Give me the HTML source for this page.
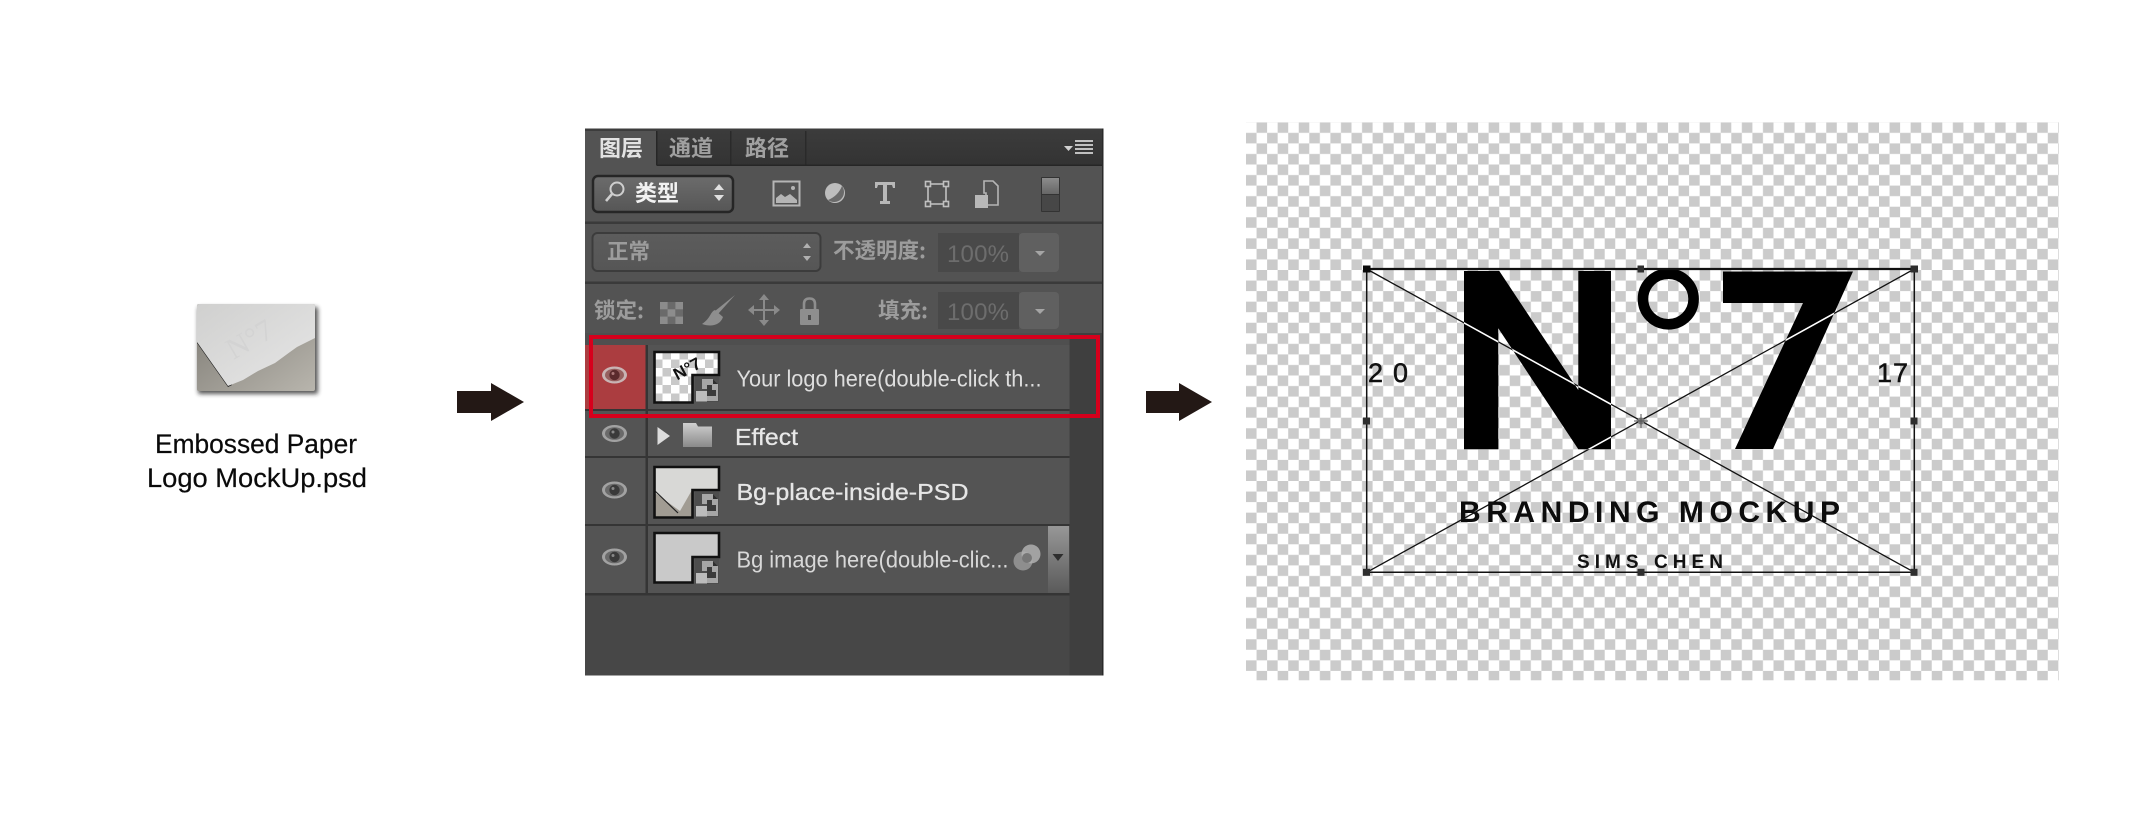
<!DOCTYPE html>
<html><head><meta charset="utf-8"><title>Embossed Paper Logo MockUp</title>
<style>
html,body{margin:0;padding:0;background:#fff;width:2153px;height:831px;overflow:hidden}
svg{display:block}
text{font-family:"Liberation Sans","Noto Sans CJK SC",sans-serif}
.cjk{font-family:"Noto Sans CJK SC","Liberation Sans",sans-serif}
</style></head><body>
<svg width="2153" height="831" viewBox="0 0 2153 831" xmlns="http://www.w3.org/2000/svg">
<defs>
<pattern id="chk" x="1246" y="122.3" width="21.1" height="21.1" patternUnits="userSpaceOnUse">
<rect width="21.1" height="21.1" fill="#fff"/><rect x="10.55" width="10.55" height="10.55" fill="#cbcbcb"/><rect y="10.55" width="10.55" height="10.55" fill="#cbcbcb"/>
</pattern>
<pattern id="chk2" x="654" y="351" width="17" height="17" patternUnits="userSpaceOnUse">
<rect width="17" height="17" fill="#fff"/><rect x="8.5" width="8.5" height="8.5" fill="#c9c9c9"/><rect y="8.5" width="8.5" height="8.5" fill="#c9c9c9"/>
</pattern>
<linearGradient id="tabBar" x1="0" y1="0" x2="0" y2="1"><stop offset="0" stop-color="#3c3c3c"/><stop offset="1" stop-color="#333"/></linearGradient>
<linearGradient id="sel" x1="0" y1="0" x2="0" y2="1"><stop offset="0" stop-color="#6c6c6c"/><stop offset="1" stop-color="#565656"/></linearGradient>
<linearGradient id="sel2" x1="0" y1="0" x2="0" y2="1"><stop offset="0" stop-color="#5c5c5c"/><stop offset="1" stop-color="#565656"/></linearGradient>
<linearGradient id="scr" x1="0" y1="0" x2="0" y2="1"><stop offset="0" stop-color="#979797"/><stop offset="1" stop-color="#5a5a5a"/></linearGradient>
<linearGradient id="tgl" x1="0" y1="0" x2="0" y2="1"><stop offset="0" stop-color="#8c8c8c"/><stop offset="1" stop-color="#666"/></linearGradient>
<linearGradient id="fold" x1="0" y1="0" x2="0" y2="1"><stop offset="0" stop-color="#cfcfcf"/><stop offset="1" stop-color="#8a8a8a"/></linearGradient>
<linearGradient id="grey" x1="0" y1="0" x2="1" y2="1"><stop offset="0" stop-color="#7d7a73"/><stop offset="1" stop-color="#b8b5ad"/></linearGradient>
<linearGradient id="paper" x1="0" y1="0" x2="1" y2="1"><stop offset="0" stop-color="#d0d0cf"/><stop offset="1" stop-color="#e6e6e6"/></linearGradient>
<filter id="blur3"><feGaussianBlur stdDeviation="2"/></filter>
<clipPath id="logoClip">
<path d="M1464 271H1499.3L1578.3 390V271H1611V449.3H1578.3L1498.3 328.3V449.3H1464Z"/>
<path d="M1723 271.5H1853L1773 449H1735L1803 303H1723Z"/>
</clipPath>
<clipPath id="thumbClip"><rect x="197" y="304" width="118" height="87" rx="2"/></clipPath>
<clipPath id="t3"><path d="M654 466H719V490H692V518H654Z"/></clipPath>
<g id="eye">
<ellipse rx="12.5" ry="8.5" fill="#a2a2a2"/>
<ellipse rx="9.5" ry="6.3" fill="#6a6a6a"/>
<circle r="5.2" fill="#3a3a3a"/><circle cx="-1.5" cy="-1.5" r="1.5" fill="#888"/>
</g>
<g id="eyeR">
<ellipse rx="12.5" ry="8.5" fill="#c9b4b4"/>
<ellipse rx="9.5" ry="6.3" fill="#96605f"/>
<circle r="5.2" fill="#5b2a2c"/><circle cx="-1.5" cy="-1.5" r="1.5" fill="#a77"/>
</g>
<g id="smart">
<rect width="24" height="25" fill="#4d4d4d"/>
<path d="M7 2H18L23 7V24H12V12H7Z" fill="#a6a6a6"/>
<path d="M12 8H17V13H21V19H12Z" fill="#3b3b3b"/>
<path d="M18 2L23 7H18Z" fill="#2e2e2e"/>
<rect x="1" y="14" width="11" height="10.5" fill="#bcbcbc"/>
</g>
</defs>

<rect width="2153" height="831" fill="#fff"/>

<!-- left thumbnail -->
<rect x="198" y="307" width="120" height="87" rx="2" fill="#222" opacity=".75" filter="url(#blur3)"/>
<g clip-path="url(#thumbClip)">
<rect x="197" y="304" width="118" height="87" fill="url(#grey)"/>
<path d="M197 343L228 387L232 385L199 339Z" fill="#1b1b1b"/>
<path d="M197 304H315V338L297 347L290 352L275 363L258 371L243 380L228 386L197 342Z" fill="url(#paper)"/>
<text x="250" y="349" font-size="30" fill="#d3d3d3" transform="rotate(-30 250 340)" text-anchor="middle" style="font-family:'Liberation Serif',serif">N°7</text>
</g>
<text x="155" y="453" font-size="26.4" fill="#0a0a0a" stroke="#0a0a0a" stroke-width=".2" textLength="202" lengthAdjust="spacingAndGlyphs">Embossed Paper</text>
<text x="147" y="487" font-size="26.8" fill="#0a0a0a" stroke="#0a0a0a" stroke-width=".2" textLength="220" lengthAdjust="spacingAndGlyphs">Logo MockUp.psd</text>

<!-- arrows -->
<path d="M457 391H491V383L524 402L491 421V413H457Z" fill="#231815"/>
<path d="M1146 391H1179V383L1212 402L1179 421V413H1146Z" fill="#231815"/>

<!-- panel -->
<rect x="585" y="128.5" width="518.5" height="547" fill="#535353"/>
<rect x="585" y="128.5" width="518.5" height="37" fill="url(#tabBar)"/>
<rect x="585" y="131" width="71" height="35.5" fill="#535353"/>
<rect x="656" y="131" width="1.5" height="34.5" fill="#262626"/>
<rect x="730" y="131" width="1.5" height="34.5" fill="#2a2a2a"/>
<rect x="805" y="131" width="1.5" height="34.5" fill="#2a2a2a"/>
<rect x="657" y="164.5" width="446" height="1.5" fill="#262626"/>
<text class="cjk" x="599" y="156" font-size="22" fill="#e2e2e2" font-weight="700">图层</text>
<text class="cjk" x="669" y="156" font-size="22" fill="#a0a0a0" font-weight="700">通道</text>
<text class="cjk" x="745" y="156" font-size="22" fill="#a0a0a0" font-weight="700">路径</text>
<g transform="translate(0,-1)">
<path d="M1064 147H1073L1068.5 152Z" fill="#d0d0d0"/>
<path d="M1075 142H1093M1075 146H1093M1075 150H1093M1075 154H1093" stroke="#c0c0c0" stroke-width="2" fill="none"/>
</g>

<!-- row 1 -->
<rect x="593" y="176" width="140" height="36" rx="5" fill="url(#sel)" stroke="#262626" stroke-width="2.5"/>
<g transform="translate(0,-2)">
<circle cx="617" cy="191" r="6.5" fill="none" stroke="#cfcfcf" stroke-width="2"/>
<path d="M612 196L606 203" stroke="#cfcfcf" stroke-width="2.6"/>
<path d="M719 186L724 192H714ZM719 203L724 197H714Z" fill="#e0e0e0"/>
<rect x="773.5" y="183.5" width="26" height="24" fill="none" stroke="#b5b5b5" stroke-width="2"/>
<path d="M776 205V200L781 196L785 199L790 196L797 202V205Z" fill="#b5b5b5"/><circle cx="793" cy="190" r="2" fill="#b5b5b5"/>
<circle cx="835" cy="195" r="10" fill="#bdbdbd"/><path d="M842 188A10 10 0 0 1 828 202Q838 198 842 188Z" fill="#6a6a6a"/>
<path d="M875 184H895V190H893L892 187H887V203H890V206H880V203H883V187H878L877 190H875Z" fill="#b8b8b8"/>
<path d="M928 186H946V206H928Z" fill="none" stroke="#b5b5b5" stroke-width="1.8"/>
<g fill="#535353" stroke="#c0c0c0" stroke-width="1.6"><rect x="925.5" y="183.5" width="5" height="5"/><rect x="943.5" y="183.5" width="5" height="5"/><rect x="925.5" y="203.5" width="5" height="5"/><rect x="943.5" y="203.5" width="5" height="5"/></g>
<path d="M984 183H993L998 188V207H986V195H984Z" fill="#535353" stroke="#b5b5b5" stroke-width="1.6"/>
<rect x="975" y="197" width="13" height="13" fill="#b8b8b8"/>
<rect x="1041" y="179" width="19" height="35" rx="1" fill="#333"/>
<rect x="1042" y="180" width="17" height="16" fill="url(#tgl)"/>
<rect x="1042" y="197" width="17" height="16" fill="#474747"/>
</g>
<text class="cjk" x="635" y="201" font-size="22" fill="#f2f2f2" font-weight="700">类型</text>
<rect x="585" y="221.5" width="518.5" height="2.5" fill="#3a3a3a"/>

<!-- row 2 -->
<rect x="592.5" y="233" width="228" height="38" rx="5" fill="url(#sel2)" stroke="#3c3c3c" stroke-width="2"/>
<text class="cjk" x="607" y="259" font-size="21.5" fill="#9c9c9c" font-weight="700">正常</text>
<path d="M807 243L811 248H803ZM807 261L811 256H803Z" fill="#b0b0b0"/>
<text class="cjk" x="833" y="258" font-size="21.5" fill="#9c9c9c" font-weight="700">不透明度:</text>
<rect x="938" y="233" width="81" height="39" fill="#494949"/>
<rect x="1019" y="233" width="40" height="39" rx="4" fill="#606060"/>
<text x="947" y="262" font-size="24" fill="#6d6d6d" textLength="62" lengthAdjust="spacing">100%</text>
<path d="M1035 251H1045L1040 256Z" fill="#a5a5a5"/>
<rect x="585" y="281.5" width="518.5" height="2.5" fill="#3a3a3a"/>

<!-- row 3 -->
<text class="cjk" x="594" y="318" font-size="21.5" fill="#9c9c9c" font-weight="700">锁定:</text>
<g transform="translate(0,-6)">
<g fill="#8c8c8c"><rect x="660" y="308" width="23" height="22" fill="#6a6a6a"/><rect x="660" y="308" width="7.6" height="7.3"/><rect x="675.4" y="308" width="7.6" height="7.3"/><rect x="667.6" y="315.3" width="7.7" height="7.3"/><rect x="660" y="322.6" width="7.6" height="7.4"/><rect x="675.4" y="322.6" width="7.6" height="7.4"/></g>
<path d="M735 301L718 320L715 317Z" fill="#8e8e8e"/>
<path d="M715 316C710 318 711 324 702 330C710 333 720 332 723 323Z" fill="#8e8e8e"/>
<path d="M764 302V330M750 316H778" stroke="#8a8a8a" stroke-width="2"/>
<path d="M764 300L769 306H759ZM764 332L769 326H759ZM748 316L754 311V321ZM780 316L774 311V321Z" fill="#8a8a8a"/>
<path d="M804 316V310Q804 304.5 809.5 304.5Q815 304.5 815 310V316" fill="none" stroke="#8e8e8e" stroke-width="2.6"/>
<rect x="800" y="315" width="19" height="16" rx="1" fill="#8e8e8e"/><rect x="808" y="321" width="3" height="5" fill="#4c4c4c"/>
</g>
<text class="cjk" x="878" y="318" font-size="21.5" fill="#9c9c9c" font-weight="700">填充:</text>
<rect x="938" y="292" width="81" height="37" fill="#494949"/>
<rect x="1019" y="292" width="40" height="37" rx="4" fill="#606060"/>
<text x="947" y="320" font-size="24" fill="#6d6d6d" textLength="62" lengthAdjust="spacing">100%</text>
<path d="M1035 309H1045L1040 314Z" fill="#a5a5a5"/>
<rect x="585" y="333" width="518.5" height="12" fill="#4f4f4f"/>

<!-- layers -->
<rect x="585" y="345" width="484.5" height="330.5" fill="#474747"/>
<rect x="1069.5" y="333" width="33" height="342.5" fill="#3f3f3f"/>
<rect x="1102" y="128.5" width="1.5" height="547" fill="#2a2a2a"/>
<rect x="585" y="345" width="484.5" height="64" fill="#545454"/>
<rect x="585" y="411" width="484.5" height="45" fill="#545454"/>
<rect x="585" y="458" width="484.5" height="66" fill="#545454"/>
<rect x="585" y="526" width="484.5" height="67" fill="#545454"/>
<rect x="585" y="345" width="60.5" height="64" fill="#ab3d40"/>
<g fill="#353535">
<rect x="585" y="409" width="484.5" height="2"/><rect x="585" y="456" width="484.5" height="2"/><rect x="585" y="524" width="484.5" height="2"/><rect x="585" y="593" width="484.5" height="2.5"/>
<rect x="645.5" y="345" width="2.5" height="250"/>
</g>
<use href="#eyeR" x="614.5" y="375"/>
<use href="#eye" x="614.5" y="433.5"/>
<use href="#eye" x="614.5" y="490"/>
<use href="#eye" x="614.5" y="557"/>

<!-- thumb 1 -->
<path d="M654.5 352H719V375H692.5V402.5H654.5Z" fill="url(#chk2)" stroke="#111" stroke-width="2.6"/>
<text x="673" y="376" font-size="17" font-weight="700" fill="#111" transform="rotate(-28 684 370)">N°7</text>
<use href="#smart" x="695" y="377"/>
<text x="736.5" y="386.7" font-size="23" fill="#dedede" textLength="305" lengthAdjust="spacingAndGlyphs">Your logo here(double-click th...</text>

<!-- row Effect -->
<path d="M657.5 427L670 436L657.5 445Z" fill="#dcdcdc"/>
<path d="M683 447V423H696L698 426.5H712V447Z" fill="url(#fold)"/>
<text x="735" y="445" font-size="23" fill="#e8e8e8" stroke="#e8e8e8" stroke-width=".3" textLength="63" lengthAdjust="spacingAndGlyphs">Effect</text>

<!-- thumb 3 -->
<g clip-path="url(#t3)">
<rect x="654" y="466" width="66" height="52" fill="#a19c93"/>
<path d="M654 466H719V490H692L680 511L655 493L654 492Z" fill="#d8d8d6"/>
<path d="M655 491L678 513" stroke="#222" stroke-width="1.2"/>
</g>
<path d="M654.5 467H719V490H692.5V517.5H654.5Z" fill="none" stroke="#111" stroke-width="2.6"/>
<use href="#smart" x="695" y="492"/>
<text x="736.5" y="500" font-size="23" fill="#e6e6e6" stroke="#e6e6e6" stroke-width=".3" textLength="232" lengthAdjust="spacingAndGlyphs">Bg-place-inside-PSD</text>

<!-- thumb 4 -->
<path d="M654.5 533H719V557H692.5V582.5H654.5Z" fill="#c9c9c9" stroke="#111" stroke-width="2.6"/>
<use href="#smart" x="695" y="559"/>
<text x="736.5" y="567.3" font-size="23" fill="#d8d8d8" textLength="272" lengthAdjust="spacingAndGlyphs">Bg image here(double-clic...</text>
<circle cx="1023" cy="561" r="9.5" fill="#8e8e8e"/><circle cx="1031" cy="554" r="9.5" fill="#b0b0b0" opacity=".85"/><circle cx="1027" cy="558" r="5" fill="#777"/>
<rect x="1048" y="526" width="21" height="67" fill="url(#scr)"/>
<path d="M1052.5 554H1063.5L1058 561Z" fill="#2e2e2e"/>

<!-- red frame -->
<rect x="591" y="337" width="507" height="79" fill="none" stroke="#d6001c" stroke-width="4"/>

<!-- checker canvas -->
<rect x="1246" y="122.3" width="813" height="558" fill="url(#chk)"/>

<!-- logo -->
<path d="M1464 271H1499.3L1578.3 390V271H1611V449.3H1578.3L1498.3 328.3V449.3H1464Z" fill="#000"/>
<circle cx="1668.3" cy="299" r="25.3" fill="none" stroke="#000" stroke-width="10.6"/>
<path d="M1723 271.5H1853L1773 449H1735L1803 303H1723Z" fill="#000"/>
<text x="1368" y="382" font-size="27" fill="#111" stroke="#111" stroke-width=".5" textLength="40" lengthAdjust="spacing">20</text>
<text x="1877" y="382" font-size="27" fill="#111" stroke="#111" stroke-width=".5" textLength="31" lengthAdjust="spacing">17</text>
<text x="1459" y="522" font-size="30" font-weight="700" fill="#0c0c0c" textLength="381" lengthAdjust="spacing">BRANDING MOCKUP</text>
<text x="1577" y="568" font-size="19" font-weight="700" fill="#111" textLength="146" lengthAdjust="spacing">SIMS CHEN</text>

<!-- transform frame -->
<g fill="none" stroke="#111">
<path d="M1366.7 269H1914.3" stroke-width="2.2"/>
<path d="M1366.7 269V572.3M1914.3 269V572.3M1366.7 572.3H1914.3" stroke-width="1.5"/>
<path d="M1366.7 269L1914.3 572.3M1914.3 269L1366.7 572.3" stroke-width="1.3"/>
</g>
<path d="M1366.7 269L1914.3 572.3M1914.3 269L1366.7 572.3" stroke="#fff" stroke-width="1.6" fill="none" clip-path="url(#logoClip)"/>
<g fill="#2f2f2f">
<rect x="1363" y="265.5" width="7.5" height="7" fill="#0a0a0a"/><rect x="1637.5" y="265.5" width="6.5" height="7"/><rect x="1910.5" y="265.5" width="7.5" height="7"/>
<rect x="1363" y="417.5" width="7" height="7"/><rect x="1910.5" y="417.5" width="7" height="7"/>
<rect x="1363" y="568.8" width="7" height="7"/><rect x="1637.5" y="568.8" width="7" height="7"/><rect x="1910.5" y="568.8" width="7" height="7"/>
</g>
<circle cx="1641" cy="421" r="3.5" fill="#7a7a7a"/>
<path d="M1641 414V428M1634 421H1648" stroke="#555" stroke-width="1"/>
</svg>
</body></html>
